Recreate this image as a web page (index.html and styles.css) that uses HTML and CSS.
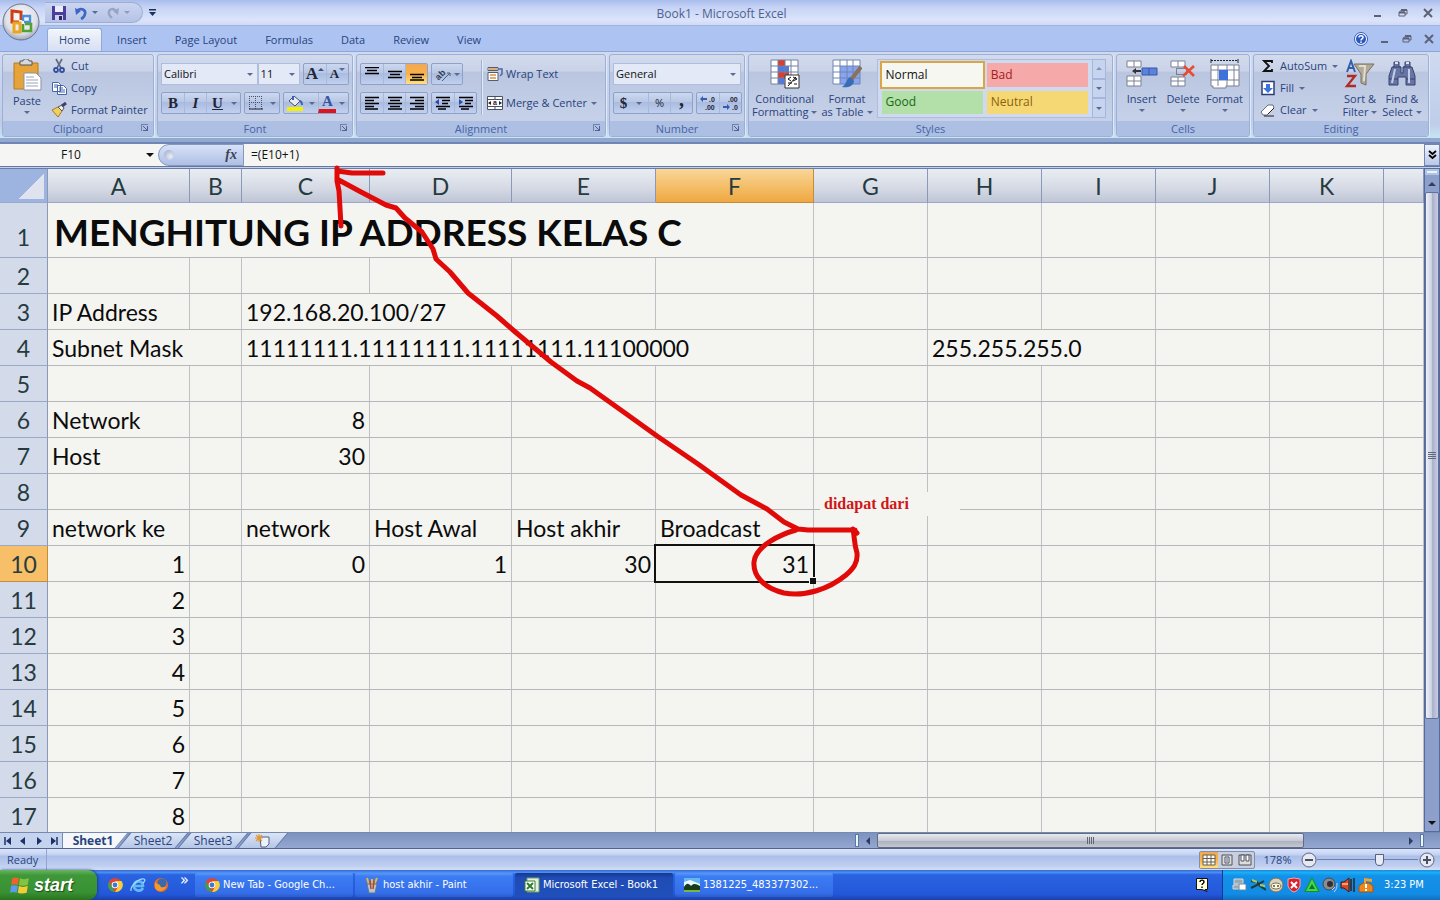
FILE: index.html
```html
<!DOCTYPE html>
<html lang="en">
<head>
<meta charset="utf-8">
<title>Book1 - Microsoft Excel</title>
<link rel="stylesheet" href="styles.css">
</head>
<body>
<div class="app">
  <header class="titlebar">
    <button class="office" aria-label="Office menu">
      <svg viewBox="0 0 38 38" width="38" height="38"><defs><radialGradient id="orb" cx=".5" cy=".4" r=".6"><stop offset="0" stop-color="#fff"/><stop offset=".7" stop-color="#dfe0e8"/><stop offset="1" stop-color="#9ea6bb"/></radialGradient></defs><circle cx="19" cy="19" r="18" fill="url(#orb)" stroke="#687494"/><g fill="none" stroke-width="3"><path d="M19 17V9l-9-1v11h7" stroke="#cf3d12"/><path d="M21 18v-5h7v6h-6" stroke="#4c8fdc" stroke-width="2.4"/><path d="M18 20h-6v9h6z" stroke="#eda61b"/><path d="M21 21v7h8v-7h-6" stroke="#53a035" stroke-width="2.6"/></g></svg>
    </button>
    <div class="quick">
      <button aria-label="Save"><svg viewBox="0 0 14 14" width="14" height="14"><path d="M0 0h14v14H0z" fill="#4c3f9c"/><path d="M3 0h8v6H3z" fill="#e9ecfa"/><path d="M3 9h8v5H3z" fill="#cdd2ea"/><path d="M7 10h3v4H7z" fill="#2b2766"/></svg></button>
      <button aria-label="Undo"><svg viewBox="0 0 14 14" width="14" height="14"><path d="M3 5c4-4 9-1 8 3-.4 2-2 4-4 5" fill="none" stroke="#3e66c4" stroke-width="2.6"/><path d="M1 2l1 7 5-4z" fill="#3e66c4"/></svg><i class="arrow"></i></button>
      <button aria-label="Redo"><svg viewBox="0 0 14 14" width="14" height="14"><path d="M10 5C6 1 2 4 3 8c.4 2 2 3 3 4" fill="none" stroke="#98a5c0" stroke-width="2.4"/><path d="M13 2l-1 7-5-4z" fill="#98a5c0"/></svg><i class="arrow faint"></i></button>
    </div>
    <button class="customize" aria-label="Customize toolbar"><svg viewBox="0 0 7 8" width="7" height="8"><path d="M0 0h7v1.500H0zM0 3h7L3.500 7z" fill="#1d2f60"/></svg></button>
    <h1>Book1 - Microsoft Excel</h1>
    <div class="winctl">
      <button aria-label="Minimize"><svg viewBox="0 0 10 10" width="10" height="10"><path d="M1 8h7" stroke="#5b6274" stroke-width="2"/></svg></button>
      <button aria-label="Restore"><svg viewBox="0 0 10 10" width="10" height="10"><path d="M3 3V2h6v4H7M1 4h6v4H1z" fill="none" stroke="#5b6274"/><path d="M1 4.500h6M3 2h6" stroke="#5b6274" stroke-width="2"/></svg></button>
      <button aria-label="Close"><svg viewBox="0 0 10 10" width="10" height="10"><path d="M1 1l8 8M9 1L1 9" stroke="#5b6274" stroke-width="2"/></svg></button>
    </div>
  </header>

  <nav class="tabs">
    <button class="tab active">Home</button><button class="tab">Insert</button><button class="tab">Page Layout</button><button class="tab">Formulas</button><button class="tab">Data</button><button class="tab">Review</button><button class="tab">View</button>
    <div class="winctl doc">
      <button aria-label="Help"><svg viewBox="0 0 14 14" width="14" height="14"><circle cx="7" cy="7" r="6.500" fill="#fff" stroke="#3758b0"/><circle cx="7" cy="7" r="5" fill="#2858c4"/><path d="M5 5.500c0-2.400 4-2.200 4-.2C9 7 7 6.800 7 8.500M7 9.500v1.500" stroke="#fff" stroke-width="1.500" fill="none"/></svg></button>
      <button aria-label="Minimize workbook"><svg viewBox="0 0 10 10" width="10" height="10"><path d="M1 8h7" stroke="#5b6274" stroke-width="2"/></svg></button>
      <button aria-label="Restore workbook"><svg viewBox="0 0 10 10" width="10" height="10"><path d="M3 3V2h6v4H7M1 4h6v4H1z" fill="none" stroke="#5b6274"/><path d="M1 4.500h6M3 2h6" stroke="#5b6274" stroke-width="2"/></svg></button>
      <button aria-label="Close workbook"><svg viewBox="0 0 10 10" width="10" height="10"><path d="M1 1l8 8M9 1L1 9" stroke="#5b6274" stroke-width="2"/></svg></button>
    </div>
  </nav>

  <div class="ribbon">
    <section class="group clipboard">
      <div class="body">
        <button class="big"><svg viewBox="0 0 30 32" width="30" height="32"><path d="M2 4h24v26H2z" fill="#e5a33a" stroke="#b77a20"/><path d="M8 2h3c0-3 6-3 6 0h3v4H8z" fill="#d8d8dc" stroke="#555"/><path d="M12 14h12l5 5v12H12z" fill="#fff" stroke="#8891a8"/><path d="M14 18h8M14 21h12M14 24h12M14 27h12" stroke="#9aa3b8"/></svg><span>Paste</span><i class="arrow"></i></button>
        <div class="stack">
          <button><svg viewBox="0 0 16 16" width="16" height="16"><path d="M5 1l5 9M11 1L6 10" stroke="#5d6b85" stroke-width="1.600"/><circle cx="5" cy="12" r="2" fill="none" stroke="#34509c" stroke-width="1.800"/><circle cx="11" cy="12" r="2" fill="none" stroke="#34509c" stroke-width="1.800"/></svg>Cut</button>
          <button><svg viewBox="0 0 16 16" width="16" height="16"><path d="M1.500 2.500h6l2 2v7h-8zM6.500 5.500h6l3 3v6h-9z" fill="#fff" stroke="#4264ac"/><path d="M3 5h4M3 7h3M8 8h4M8 10h6M8 12h6" stroke="#4264ac"/></svg>Copy</button>
          <button><svg viewBox="0 0 16 16" width="16" height="16"><path d="M1 8l6-3 4 4-4 6z" fill="#edd062" stroke="#a87a1c"/><path d="M7 5l4-2 2 3-2 3z" fill="#eee" stroke="#555"/><path d="M11 4l4-3" stroke="#463c70" stroke-width="3"/></svg>Format Painter</button>
        </div>
      </div>
      <footer>Clipboard<button class="launch" aria-label="Clipboard options"></button></footer>
    </section>

    <section class="group font">
      <div class="body rows">
        <div class="line">
          <label class="pick family"><select aria-label="Font"><option>Calibri</option></select><i class="arrow"></i></label><label class="pick size"><select aria-label="Font size"><option>11</option></select><i class="arrow"></i></label>
          <div class="set push"><button class="serif grow" aria-label="Increase font size">A<i class="arrow up"></i></button><button class="serif shrink" aria-label="Decrease font size">A<i class="arrow"></i></button></div>
        </div>
        <div class="line">
          <div class="set"><button class="serif">B</button><button class="serif italic">I</button><button class="serif under">U</button><button class="slim" aria-label="Underline style"><i class="arrow"></i></button></div>
          <div class="set"><button aria-label="Borders"><svg viewBox="0 0 14 14" width="14" height="14"><path d="M.5 0v13M6.500 0v13M12.500 0v13M0 .5h13M0 6.500h13" stroke="#465068" stroke-dasharray="1 1"/><path d="M0 13h14" stroke="#222"/></svg></button><button class="slim" aria-label="Border style"><i class="arrow"></i></button></div>
          <div class="set push"><button aria-label="Fill color"><svg viewBox="0 0 16 16" width="16" height="16"><path d="M2 6l5-5 6 5-5 5z" fill="#e8ebf4" stroke="#4b5268"/><path d="M6 5V1M12 6c3 0 3 2 3 4" stroke="#3b62b4" stroke-width="2" fill="none"/><path d="M0 12h16v4H0z" fill="#f5f000"/></svg></button><button class="slim" aria-label="Fill color list"><i class="arrow"></i></button><button class="serif color">A</button><button class="slim" aria-label="Font color list"><i class="arrow"></i></button></div>
        </div>
      </div>
      <footer>Font<button class="launch" aria-label="Font options"></button></footer>
    </section>

    <section class="group alignment">
      <div class="body split">
        <div class="rows">
          <div class="line">
            <div class="set"><button aria-label="Top align"><svg viewBox="0 0 14 14" width="14" height="14"><path d="M0 .5h14M2 3.500h10M0 6.500h14" stroke="#000" stroke-width="1.500"/></svg></button><button aria-label="Middle align"><svg viewBox="0 0 14 14" width="14" height="14"><path d="M0 4.500h14M2 7.500h10M0 10.500h14" stroke="#000" stroke-width="1.500"/></svg></button><button class="on" aria-label="Bottom align"><svg viewBox="0 0 14 14" width="14" height="14"><path d="M0 7.500h14M2 10.500h10M0 13h14" stroke="#000" stroke-width="1.500"/></svg></button></div>
            <div class="set orient"><button aria-label="Orientation"><svg viewBox="0 0 18 16" width="18" height="16"><text x="1" y="12" class="ab" transform="rotate(-45 6 9)">ab</text><path d="M8 15l8-8M16 7h-3M16 7v3" stroke="#555c70" fill="none"/></svg><i class="arrow"></i></button></div>
          </div>
          <div class="line">
            <div class="set"><button aria-label="Align left"><svg viewBox="0 0 14 14" width="14" height="14"><path d="M0 1.500h14M0 4.500h9M0 7.500h14M0 10.500h9M0 13h13" stroke="#000" stroke-width="1.400"/></svg></button><button aria-label="Center"><svg viewBox="0 0 14 14" width="14" height="14"><path d="M0 1.500h14M2 4.500h10M0 7.500h14M2 10.500h10M0 13h14" stroke="#000" stroke-width="1.400"/></svg></button><button aria-label="Align right"><svg viewBox="0 0 14 14" width="14" height="14"><path d="M0 1.500h14M5 4.500h9M0 7.500h14M5 10.500h9M0 13h14" stroke="#000" stroke-width="1.400"/></svg></button></div>
            <div class="set"><button aria-label="Decrease indent"><svg viewBox="0 0 16 14" width="16" height="14"><path d="M1 1.500h14M7 4.500h8M7 7.500h6M1 10.500h14M3 13h8" stroke="#000" stroke-width="1.500"/><path d="M0 6l4-3v6z" fill="#2b4cb0"/></svg></button><button aria-label="Increase indent"><svg viewBox="0 0 16 14" width="16" height="14"><path d="M1 1.500h14M7 4.500h8M7 7.500h6M1 10.500h14M3 13h8" stroke="#000" stroke-width="1.500"/><path d="M5 6L1 3v6z" fill="#2b4cb0"/></svg></button></div>
          </div>
        </div>
        <div class="rows wrap">
          <button class="text"><svg viewBox="0 0 16 16" width="16" height="16"><path d="M1 1.500h10v3H1zM1 6.500h10v8H1z" fill="#fff" stroke="#555c6e"/><path d="M2 3h8M3 9h6M3 12h6" stroke="#d99342" stroke-width="1.500"/><path d="M11 3h4v5l-2 2" fill="none" stroke="#4d66a8" stroke-width="1.500"/></svg>Wrap Text</button>
          <button class="text"><svg viewBox="0 0 16 16" width="16" height="16"><path d="M.5 1.500h15v13H.5zM.5 4.500h15M.5 11.500h15M8 1v3M8 12v3" fill="#fff" stroke="#4b5062"/><path d="M1 8l3-2v4zM15 8l-3-2v4z" fill="#222"/><text x="6" y="10" class="tiny">a</text></svg>Merge &amp; Center<i class="arrow"></i></button>
        </div>
      </div>
      <footer>Alignment<button class="launch" aria-label="Alignment options"></button></footer>
    </section>

    <section class="group number">
      <div class="body rows">
        <label class="pick general"><select aria-label="Number format"><option>General</option></select><i class="arrow"></i></label>
        <div class="line">
          <div class="set num"><button class="serif">$<i class="arrow"></i></button><button>%</button><button class="serif comma">,</button></div>
          <div class="set dec push"><button aria-label="Increase decimal"><svg viewBox="0 0 18 18" width="18" height="18"><path d="M1 5l3-3v2h4v2H4v2z" fill="#345cb5"/><text x="10" y="8" class="tiny">.0</text><text x="6" y="16" class="tiny">.00</text></svg></button><button aria-label="Decrease decimal"><svg viewBox="0 0 18 18" width="18" height="18"><text x="6" y="8" class="tiny">.00</text><text x="10" y="16" class="tiny">.0</text><path d="M8 13l-3-3v2H1v2h4v2z" fill="#345cb5"/></svg></button></div>
        </div>
      </div>
      <footer>Number<button class="launch" aria-label="Number options"></button></footer>
    </section>

    <section class="group styles">
      <div class="body">
        <button class="big"><svg viewBox="0 0 30 30" width="30" height="30"><path d="M1 1h27v24H1z" fill="#fff"/><path d="M8 1h7v6H8zM8 13h11v6H8z" fill="#dd3d2d"/><path d="M8 7h11v6H8zM8 19h6v6H8z" fill="#5379dc"/><path d="M1 1h27v24H1zM8 1v24M15 1v24M21 1v24M1 7h27M1 13h27M1 19h27" fill="none" stroke="#7280a0"/><path d="M15 16h14v13H15z" fill="#fff" stroke="#333"/><path d="M21 18l-3 2 3 2M18 24h4M23 18l4 2-4 2M24 25h3M18 27l8-9" stroke="#111" fill="none"/></svg><span>Conditional<br>Formatting<i class="arrow"></i></span></button>
        <button class="big"><svg viewBox="0 0 30 30" width="30" height="30"><path d="M1 1h27v24H1z" fill="#fff"/><path d="M8 7h20v18H8z" fill="#86a5ee"/><path d="M1 1h27v24H1zM8 1v24M15 1v24M21 1v24M1 7h27M1 13h27M1 19h27" fill="none" stroke="#7084b4"/><path d="M29 8L18 22" stroke="#8c715a" stroke-width="4"/><path d="M18 18l4 4c-1 6-7 7-12 6 5-3 4-8 8-10z" fill="#376cb8"/></svg><span>Format<br>as Table<i class="arrow"></i></span></button>
        <div class="gallery"><button class="normal">Normal</button><button class="bad">Bad</button><button class="good">Good</button><button class="neutral">Neutral</button></div>
        <div class="spin"><button aria-label="Previous styles"><i class="arrow up faint"></i></button><button aria-label="Next styles"><i class="arrow"></i></button><button class="more" aria-label="More styles"><i class="arrow"></i></button></div>
      </div>
      <footer>Styles</footer>
    </section>

    <section class="group cells">
      <div class="body">
        <button class="big"><svg viewBox="0 0 32 30" width="32" height="30"><path d="M1 2h14v6H1zM8 2v6M1 17h14v10H1zM1 22h14M8 17v10" fill="#fff" stroke="#7b8194"/><path d="M16 9h15v7H16z" fill="#5a83e0" stroke="#3656a2"/><path d="M23 9v7" stroke="#3656a2"/><path d="M6 12l4-3v2h5v2h-5v2z" fill="#333"/></svg><span>Insert</span><i class="arrow"></i></button>
        <button class="big"><svg viewBox="0 0 28 30" width="28" height="30"><path d="M2 2h14v6H2zM9 2v6M2 18h14v9H2zM2 22h14M9 18v9" fill="#fff" stroke="#7b8194"/><path d="M7.500 9.500h10v6h-10z" fill="none" stroke="#333" stroke-dasharray="1 1"/><path d="M15 7l10 10M25 7L14 17" stroke="#e54d32" stroke-width="2.600"/></svg><span>Delete</span><i class="arrow"></i></button>
        <button class="big"><svg viewBox="0 0 32 30" width="32" height="30"><path d="M2 1.500h27" stroke="#222" stroke-dasharray="2 1"/><path d="M2 0v4M29 0v4" stroke="#222"/><path d="M2 6h28v21H17v2H4v-2H2z" fill="#fff" stroke="#7b8194"/><path d="M9 6v21M18 6v21M25 6v21M2 11h28M2 21h28" stroke="#7b8194"/><path d="M10 11h9v10h-9z" fill="#3d71dc"/></svg><span>Format</span><i class="arrow"></i></button>
      </div>
      <footer>Cells</footer>
    </section>

    <section class="group editing">
      <div class="body">
        <div class="stack">
          <button><svg viewBox="0 0 16 16" width="16" height="16"><path d="M12 5V3H4l5 5-5 5h8v-2" fill="none" stroke="#111" stroke-width="1.800"/></svg>AutoSum<i class="arrow"></i></button>
          <button><svg viewBox="0 0 16 16" width="16" height="16"><path d="M2 1.500h12v13H2z" fill="#fff" stroke="#2c3c78" stroke-width="1.500"/><path d="M6 4h4v4h3l-5 5-5-5h3z" fill="#3c73dd"/></svg>Fill<i class="arrow"></i></button>
          <button><svg viewBox="0 0 16 16" width="16" height="16"><path d="M1 10l7-7h5l1 3-7 7H3z" fill="#fff" stroke="#686e80"/><path d="M4 14h10M8 12l6-6" stroke="#222"/></svg>Clear<i class="arrow"></i></button>
        </div>
        <button class="big"><svg viewBox="0 0 32 30" width="32" height="30"><path d="M10 5h20l-8 10v11l-5-2V15z" fill="#b4aa98" stroke="#756e64"/><path d="M15 7h6l-1 15" stroke="#e5ddd0" fill="none" stroke-width="2"/><path d="M3 13L7 2l4 11M4 9h6" fill="none" stroke="#315fae" stroke-width="2"/><path d="M3 17h8L3 27h9" fill="none" stroke="#b02c22" stroke-width="2.300"/></svg><span>Sort &amp;<br>Filter<i class="arrow"></i></span></button>
        <button class="big"><svg viewBox="0 0 32 30" width="32" height="30"><path d="M8 3h5v5h2v6h2V8h2V3h5v5h2l3 9v9h-9v-8h-8v8H3v-9l3-9h2z" fill="#6675a3" stroke="#39456e"/><path d="M3 20h9M20 20h9M7 8h8M17 8h8" stroke="#39456e"/><path d="M9 10L6 24M23 10v14" stroke="#c3cde8" stroke-width="2"/><path d="M9 4h3M20 4h3" stroke="#dde3f4" stroke-width="2"/></svg><span>Find &amp;<br>Select<i class="arrow"></i></span></button>
      </div>
      <footer>Editing</footer>
    </section>
  </div>

  <div class="formula">
    <input class="namebox" aria-label="Name box" value="F10">
    <button class="namelist" aria-label="Name list"><i class="arrow dark"></i></button>
    <div class="fx"><i class="knob"></i><button aria-label="Insert function">fx</button></div>
    <input class="expr" aria-label="Formula" value="=(E10+1)">
    <button class="expand" aria-label="Expand formula bar"><svg viewBox="0 0 9 10" width="9" height="10"><path d="M1 1l3.500 3L8 1M1 5l3.500 3L8 5" fill="none" stroke="#000" stroke-width="1.800"/></svg></button>
  </div>

  <main class="work">
    <div class="sheet">
      <table>
        <colgroup><col class="w48"><col class="w142"><col class="w52"><col class="w128"><col class="w142"><col class="w144"><col class="w158"><col class="w114"><col class="w114"><col class="w114"><col class="w114"><col class="w114"><col></colgroup>
        <thead><tr><th class="corner"></th><th>A</th><th>B</th><th>C</th><th>D</th><th>E</th><th class="sel">F</th><th>G</th><th>H</th><th>I</th><th>J</th><th>K</th><th></th></tr></thead>
        <tbody>
          <tr class="tall"><th>1</th><td colspan="6" class="title">MENGHITUNG IP ADDRESS KELAS C</td><td></td><td></td><td></td><td></td><td></td><td></td></tr>
          <tr><th>2</th><td></td><td></td><td></td><td></td><td></td><td></td><td></td><td></td><td></td><td></td><td></td><td></td></tr>
          <tr><th>3</th><td>IP Address</td><td></td><td colspan="2">192.168.20.100/27</td><td></td><td></td><td></td><td></td><td></td><td></td><td></td><td></td></tr>
          <tr><th>4</th><td colspan="2">Subnet Mask</td><td colspan="4">11111111.11111111.11111111.11100000</td><td></td><td colspan="2">255.255.255.0</td><td></td><td></td><td></td></tr>
          <tr><th>5</th><td></td><td></td><td></td><td></td><td></td><td></td><td></td><td></td><td></td><td></td><td></td><td></td></tr>
          <tr><th>6</th><td>Network</td><td></td><td class="n">8</td><td></td><td></td><td></td><td></td><td></td><td></td><td></td><td></td><td></td></tr>
          <tr><th>7</th><td>Host</td><td></td><td class="n">30</td><td></td><td></td><td></td><td></td><td></td><td></td><td></td><td></td><td></td></tr>
          <tr><th>8</th><td></td><td></td><td></td><td></td><td></td><td></td><td></td><td></td><td></td><td></td><td></td><td></td></tr>
          <tr><th>9</th><td>network ke</td><td></td><td>network</td><td>Host Awal</td><td>Host akhir</td><td>Broadcast</td><td></td><td></td><td></td><td></td><td></td><td></td></tr>
          <tr><th class="sel">10</th><td class="n">1</td><td></td><td class="n">0</td><td class="n">1</td><td class="n">30</td><td class="n cursor">31</td><td></td><td></td><td></td><td></td><td></td><td></td></tr>
          <tr><th>11</th><td class="n">2</td><td></td><td></td><td></td><td></td><td></td><td></td><td></td><td></td><td></td><td></td><td></td></tr>
          <tr><th>12</th><td class="n">3</td><td></td><td></td><td></td><td></td><td></td><td></td><td></td><td></td><td></td><td></td><td></td></tr>
          <tr><th>13</th><td class="n">4</td><td></td><td></td><td></td><td></td><td></td><td></td><td></td><td></td><td></td><td></td><td></td></tr>
          <tr><th>14</th><td class="n">5</td><td></td><td></td><td></td><td></td><td></td><td></td><td></td><td></td><td></td><td></td><td></td></tr>
          <tr><th>15</th><td class="n">6</td><td></td><td></td><td></td><td></td><td></td><td></td><td></td><td></td><td></td><td></td><td></td></tr>
          <tr><th>16</th><td class="n">7</td><td></td><td></td><td></td><td></td><td></td><td></td><td></td><td></td><td></td><td></td><td></td></tr>
          <tr><th>17</th><td class="n">8</td><td></td><td></td><td></td><td></td><td></td><td></td><td></td><td></td><td></td><td></td><td></td></tr>
        </tbody>
      </table>
    </div>
    <div class="vscroll"><i class="vsplit"></i><button aria-label="Scroll up"><i class="arrow up dark"></i></button><div class="vthumb"><i></i></div><div class="vtrack"></div><button aria-label="Scroll down"><i class="arrow dark"></i></button></div>
    <div class="note">didapat dari</div>
    <svg class="ink" viewBox="0 0 1440 664" width="1440" height="664">
      <path d="M383 4H352L337 2V-1V12L339 22L341 57M337 10L361 23L386 36L396 39L405 49L422 63L433 80L436 90L450 103L468 124L497 147L513 161L532 177L551 193L577 212L590 219L625 244L657 267L698 295L741 326L767 340L784 353L798 360L808 361H855M796 361C782 365 756 376 754 393C753 406 763 419 784 424C805 428 829 420 846 406C853 400 858 394 857 384C854 375 855 371 853 360L857 364"/>
    </svg>
  </main>

  <div class="sheetbar">
    <div class="sheetnav"><button aria-label="First sheet"><svg viewBox="0 0 8 8" width="8" height="8"><path d="M1 0v8" stroke="#1c3264" stroke-width="1.500"/><path d="M7 0v8L2 4z" fill="#1c3264"/></svg></button><button aria-label="Previous sheet"><svg viewBox="0 0 8 8" width="8" height="8"><path d="M6 0v8L1 4z" fill="#1c3264"/></svg></button><button aria-label="Next sheet"><svg viewBox="0 0 8 8" width="8" height="8"><path d="M2 0v8l5-4z" fill="#1c3264"/></svg></button><button aria-label="Last sheet"><svg viewBox="0 0 8 8" width="8" height="8"><path d="M1 0v8l5-4z" fill="#1c3264"/><path d="M7 0v8" stroke="#1c3264" stroke-width="1.500"/></svg></button></div>
    <button class="stab current">Sheet1</button><button class="stab">Sheet2</button><button class="stab">Sheet3</button><button class="stab add" aria-label="Insert sheet"><svg viewBox="0 0 16 14" width="16" height="14"><path d="M5 3h9v7l-3 3H6z" fill="#eef2fa" stroke="#50607e"/><path d="M4 0v8M0 4h8M1 1l6 6M7 1L1 7" stroke="#e09a35" stroke-width="1.200"/></svg></button>
    <div class="hscroll"><i class="hsplit"></i><button aria-label="Scroll left"><i class="tri left"></i></button><div class="hthumb"><i></i></div><div class="htrack"></div><button aria-label="Scroll right"><i class="tri right"></i></button><i class="hsplit"></i></div>
  </div>

  <div class="status">
    <span class="ready">Ready</span>
    <div class="views">
      <button class="on" aria-label="Normal view"><svg viewBox="0 0 14 12" width="14" height="12"><path d="M1 1h12v10H1zM5 1v10M9 1v10M1 4.500h12M1 8h12" fill="#fff" stroke="#675e4c"/></svg></button><button aria-label="Page layout view"><svg viewBox="0 0 14 12" width="14" height="12"><path d="M2 1h10v10H2z" fill="#ddd" stroke="#4d5260"/><path d="M5 3h4v6H5zM6 5h2M6 7h2" fill="#fff" stroke="#4d5260"/></svg></button><button aria-label="Page break view"><svg viewBox="0 0 14 12" width="14" height="12"><path d="M1 1h12v10H1z" fill="#ddd" stroke="#4d5260"/><path d="M3 1h3v6H3zM8 1h3v6H8z" fill="#fff" stroke="#4d5260"/></svg></button>
    </div>
    <button class="percent">178%</button>
    <button class="round" aria-label="Zoom out"><svg viewBox="0 0 16 16" width="16" height="16"><circle cx="8" cy="8" r="7" fill="#e6e9f1" stroke="#5d6680"/><path d="M4 8h8" stroke="#4a5165" stroke-width="2"/></svg></button>
    <input class="zoom" type="range" aria-label="Zoom" min="0" max="100" value="63">
    <button class="round" aria-label="Zoom in"><svg viewBox="0 0 16 16" width="16" height="16"><circle cx="8" cy="8" r="7" fill="#e6e9f1" stroke="#5d6680"/><path d="M4 8h8M8 4v8" stroke="#4a5165" stroke-width="2"/></svg></button>
  </div>

  <footer class="taskbar">
    <button class="start"><svg viewBox="0 0 18 18" width="20" height="20"><path d="M2 3c2-1 4-1 6 0L7 9C5 8 3 8 1 9z" fill="#ef622c"/><path d="M9 3c2 1 5 1 8 0l-1 6c-3 1-6 1-8 0z" fill="#82c341"/><path d="M1 10c2-1 4-1 6 0l-1 6c-2-1-4-1-6 0z" fill="#5a9df0"/><path d="M8 10c2 1 5 1 8 0l-1 6c-3 1-6 1-8 0z" fill="#f7cb35"/></svg>start</button>
    <div class="launchers">
      <button aria-label="Chrome"><svg viewBox="0 0 16 16" width="16" height="16"><g id="chrome"><circle cx="8" cy="8" r="7" fill="#de4537"/><path d="M2 4.500L6 11l2 4A7 7 0 0 1 2 4.500z" fill="#3f9d4f"/><path d="M8 4h6.500A7 7 0 0 1 8 15l3-5z" fill="#f6cd3d"/><circle cx="8" cy="8" r="3.300" fill="#fff"/><circle cx="8" cy="8" r="2.400" fill="#3f76d8"/></g></svg></button>
      <button aria-label="Internet Explorer"><svg viewBox="0 0 16 16" width="16" height="16"><path d="M13 11c-3 5-10 2-9-3s9-5 9 1H4" fill="none" stroke="#63b9f4" stroke-width="2.600"/><path d="M1 14C0 9 9 1 14 2c2 1 0 3-1 4" fill="none" stroke="#a7dcff" stroke-width="1.200"/></svg></button>
      <button aria-label="Firefox"><svg viewBox="0 0 16 16" width="16" height="16"><circle cx="8" cy="8" r="7" fill="#ea6b22"/><circle cx="9" cy="6" r="4.500" fill="#3868ad"/><path d="M2 3c0 4 2 3 5 5 0 3 4 3 6 1-1 6-10 7-11 1z" fill="#f49a2c"/></svg></button>
      <button class="chev" aria-label="More shortcuts">»</button>
    </div>
    <div class="tasks">
      <button class="task"><svg viewBox="0 0 16 16" width="16" height="16"><use href="#chrome"/></svg><span>New Tab - Google Ch...</span></button>
      <button class="task"><svg viewBox="0 0 16 16" width="16" height="16"><path d="M5 8L3 1M8 8V2M10 8l3-7" stroke="#eab344" stroke-width="2"/><path d="M3 7h10l-2 9H5z" fill="#b9c4cf" stroke="#65758a"/><path d="M6 4l1 8M10 4l-1 8" stroke="#b04630" stroke-width="1.500"/></svg><span>host akhir - Paint</span></button>
      <button class="task pressed"><svg viewBox="0 0 16 16" width="16" height="16"><path d="M3 1h12v14H3z" fill="#e4f0dc" stroke="#71a164"/><path d="M1 4h10v10H1z" fill="#fff" stroke="#397e35"/><path d="M3 6l6 6M9 6l-6 6" stroke="#2e7d2e" stroke-width="2"/></svg><span>Microsoft Excel - Book1</span></button>
      <button class="task"><svg viewBox="0 0 16 16" width="16" height="16"><path d="M0 1h16v14H0z" fill="#63b8ed"/><path d="M0 5l6-2 10 4v3H0z" fill="#edf7ff"/><path d="M0 10c3-5 5-3 7-1 3-3 5-2 9 0v4H0z" fill="#153f1c"/><path d="M0 13h16v2H0z" fill="#7cb543"/></svg><span>1381225_483377302...</span></button>
    </div>
    <button class="lang" aria-label="Help bar"><svg viewBox="0 0 12 14" width="12" height="14"><path d="M.5.500h11v11H9l2 2-5-2H.5z" fill="#ffffdf" stroke="#111"/><path d="M4 4c0-2.500 4-2.500 4 0 0 1.500-2 1.500-2 3M6 8.500v1.500" fill="none" stroke="#000" stroke-width="1.400"/></svg></button>
    <div class="tray">
      <svg viewBox="0 0 16 16" width="16" height="16"><path d="M2 2h9v5H2zM1 8h6v4H1z" fill="#9ea9af" stroke="#d6dcdf"/><path d="M7 7h7v6H7z" fill="#fff" stroke="#6887a5"/></svg>
      <svg viewBox="0 0 16 16" width="16" height="16"><path d="M1 4l6 1 3 4 6 4M1 11l6-3 7-4" stroke="#233b35" stroke-width="2" fill="none"/><path d="M2 3l5 2M10 8l5 1" stroke="#a4cf68" stroke-width="2"/></svg>
      <svg viewBox="0 0 16 16" width="16" height="16"><circle cx="8" cy="8" r="7" fill="#d9d4bd" stroke="#7c705a"/><ellipse cx="8" cy="9" rx="5" ry="3" fill="#fff7dd" stroke="#786b54"/><path d="M6 8v2M10 8v2" stroke="#594f40" stroke-width="1.500"/></svg>
      <svg viewBox="0 0 16 16" width="16" height="16"><path d="M2 2l6-1 6 1v7c-1 3-3 5-6 6-3-1-5-3-6-6z" fill="#d92231" stroke="#f5a8a5"/><path d="M5 5l6 6M11 5l-6 6" stroke="#fff" stroke-width="2"/></svg>
      <svg viewBox="0 0 16 16" width="16" height="16"><path d="M8 0l8 15H0z" fill="#159326"/><path d="M8 2L2 14h12z" fill="#42d650"/><path d="M8 7l3 5H5z" fill="#147528"/></svg>
      <svg viewBox="0 0 16 16" width="16" height="16"><circle cx="7" cy="7" r="6" fill="#8b8b8c" stroke="#4a4650"/><circle cx="8" cy="7" r="3" fill="#302e34"/><path d="M12 15c3-3 3-6 3-9M10 13l3-3" stroke="#d1daf0" fill="none"/></svg>
      <svg viewBox="0 0 16 16" width="16" height="16"><path d="M1 5h3l5-4v14l-5-4H1z" fill="#dd4825" stroke="#3d1713"/><path d="M11 2v12M14 1v14" stroke="#2d2320" stroke-width="1.500"/><path d="M2 7h6" stroke="#ffa06c" stroke-width="2"/></svg>
      <svg viewBox="0 0 16 16" width="16" height="16"><path d="M1 15V9l4-3h6l4 3v6z" fill="#ed871c" stroke="#9f5719"/><path d="M6 6V1l8 1v3l-6-1v3" fill="#f1a231"/><path d="M8 7v4M8 12v2" stroke="#fff" stroke-width="2"/></svg>
      <time>3:23 PM</time>
    </div>
  </footer>
</div>
</body>
</html>
```

FILE: styles.css
```css
* { box-sizing: border-box; }
body { margin: 0; font: 11px/14px "Open Sans", "Noto Sans", sans-serif; color: #29437c; background: #b4c3e8; }
button, input, select { font: inherit; color: inherit; border: 0; padding: 0; margin: 0; background: none; }
button { display: flex; align-items: center; justify-content: center; white-space: nowrap; }
svg { display: block; flex: none; }
.app { height: 100vh; display: flex; flex-direction: column; overflow: hidden; }

.arrow { display: inline-block; flex: none; border: 3px solid transparent; border-top-color: #5a6a94; border-bottom: 0; margin-left: 4px; }
.arrow.up { border: 3px solid transparent; border-bottom-color: #3d5080; border-top: 0; }
.arrow.faint { opacity: .5; }
.arrow.dark { border-width: 4px 4px 0; border-top-color: #111; }
.arrow.up.dark { border-width: 0 4px 4px; border-bottom-color: #333c5c; }

/* title bar */
.titlebar { position: relative; height: 26px; display: flex; align-items: center; padding-left: 45px; background: linear-gradient(#a9bdec, #c6d3f5 30%, #dbe4fa 80%, #cfdaf5); border-bottom: 1px solid #a2b4de; }
.office { position: absolute; left: 2px; top: 3px; z-index: 3; }
.quick { width: 98px; height: 21px; padding-left: 7px; display: flex; align-items: center; gap: 8px; border: 1px solid #9eadd2; border-left: 0; border-radius: 0 11px 11px 0; background: linear-gradient(#cbd5f0, #b6c3e6); }
.customize { margin-left: 6px; }
.titlebar h1 { flex: 1; margin: 0; padding-top: 2px; padding-right: 86px; font-size: 12px; line-height: 16px; font-weight: 400; color: #4e6290; text-align: center; }
.winctl { display: flex; gap: 15px; padding-right: 7px; }

.tabs { height: 25px; display: flex; align-items: flex-end; padding-left: 47px; background: #adc4f3; position: relative; }
.tab { height: 23px; padding: 0 14px; }
.tab.active { padding: 0 11px; margin-right: 1px; border: 1px solid #8fa8d8; border-bottom: 0; border-radius: 3px 3px 0 0; background: linear-gradient(#f1f5fc, #d8dff1); box-shadow: inset 0 1px #fff; }
.tabs .winctl { margin-left: auto; align-self: center; align-items: center; padding-right: 6px; gap: 12px; }

/* ribbon */
.ribbon { height: 92px; display: flex; gap: 3px; padding: 2px 11px 5px 2px; border-top: 1px solid #8fa5d8; border-bottom: 1px solid #6e84b4; background: linear-gradient(#cfdaf1, #bfcdea 80%, #c5e5f3 95%, #94a9d0 96%); }
.group { display: flex; flex-direction: column; overflow: hidden; border: 1px solid #9dafd4; border-radius: 3px; background: linear-gradient(#d2daed, #c9d2e7 20%, #bac6e0 21%, #cad4ec); box-shadow: 1px 0 #dfeaf8; }
.group footer { height: 15px; position: relative; text-align: center; line-height: 16px; color: #4863a4; background: #adc0e4; }
.launch { position: absolute; right: 5px; top: 3px; width: 7px; height: 7px; border-top: 1px solid #7281a8; border-left: 1px solid #7281a8; }
.launch::after { content: ""; position: absolute; right: 0; bottom: 0; width: 4px; height: 4px; border-right: 1px solid #53648f; border-bottom: 1px solid #53648f; background: linear-gradient(45deg, transparent 40%, #53648f 40%, #53648f 60%, transparent 60%); }
.body { flex: 1; display: flex; min-height: 0; }
.clipboard { width: 152px; }
.font { width: 196px; }
.alignment { width: 250px; }
.number { width: 136px; }
.styles { flex: 1; }
.cells { width: 134px; }
.editing { width: 176px; }
.big { flex-direction: column; justify-content: flex-start; padding-top: 4px; line-height: 13px; }
.big > span { padding-top: 3px; }
.big > .arrow { margin: 4px 0 0; }
.big span .arrow { margin-left: 3px; vertical-align: 2px; }
.clipboard .big { width: 48px; }
.stack { display: flex; flex-direction: column; }
.stack button { height: 22px; justify-content: flex-start; gap: 4px; }
.stack .arrow, .text .arrow { margin-left: 1px; }
.rows { display: flex; flex-direction: column; gap: 7px; padding: 8px 3px 0; }
.line { display: flex; gap: 3px; height: 22px; }
.push { margin-left: auto; }
.pick { position: relative; display: flex; height: 22px; background: #e3e9f7; border: 1px solid #adbddd; }
.pick select { appearance: none; width: 100%; padding-left: 2px; color: #111; }
.pick .arrow { position: absolute; right: 4px; top: 9px; }
.pick.family { width: 98px; }
.pick.size { width: 43px; margin-left: -3px; }
.set { display: flex; border: 1px solid #8da1cb; border-radius: 2px; background: linear-gradient(#ccd8f0, #b9c7e5 45%, #a9bbdf 46%, #c2d0ef); }
.set button { width: 22px; color: #202636; }
.set button + button:not(.slim) { border-left: 1px solid #a9b9da; }
.set .slim { width: 12px; }
.slim .arrow { margin: 0; }
.serif { font-family: "Liberation Serif", serif; font-weight: 700; font-size: 15px; }
.italic { font-style: italic; }
.under { text-decoration: underline; }
.grow { font-size: 17px; }
.shrink { font-size: 13px; }
.grow .arrow, .shrink .arrow { margin: 0 0 9px; }
.set .color { color: #35559c; line-height: 13px; border-bottom: 4px solid #dc151c; width: 18px; }
.on { background: linear-gradient(#f0a955, #fbb045 50%, #ffe185); }
.orient button { width: 30px; }
.orient .arrow { margin-left: 2px; }
.ab { font: bold 9px "Liberation Sans", sans-serif; fill: #333a4d; }
.tiny { font: bold 7px "Liberation Sans", sans-serif; fill: #1d2435; }
.split .wrap { flex: 1; margin: 5px 0 6px 1px; padding: 3px 0 0 5px; border-left: 1px solid #9eafd2; box-shadow: inset 1px 0 #e3eafa; }
.text { height: 22px; justify-content: flex-start; gap: 3px; }
.number .pick { width: 128px; }
.num button:first-child { width: 34px; }
.num .arrow { margin-left: 9px; }
.num .comma { font-size: 20px; line-height: 10px; padding-bottom: 8px; }
.styles .body { padding: 0 4px 0 3px; gap: 4px; }
.gallery { flex: 1; margin: 4px 0 3px; display: grid; grid-template: 1fr 1fr / 1fr 1fr; gap: 4px; padding: 3px 4px; font-size: 12px; background: #cfdaf0; border: 1px solid #aebddb; }
.gallery button { justify-content: flex-start; padding-left: 4px; }
.normal { background: #f7f7f2; color: #111; outline: 2px solid #dba445; }
.bad { background: #f5a9a9; color: #a3201c; }
.good { background: #b3dfa9; color: #176817; }
.neutral { background: #f5d874; color: #8c5f0c; }
.spin { width: 14px; margin: 4px 2px 3px -5px; display: flex; flex-direction: column; }
.spin button { flex: 1; border: 1px solid #a5b6da; background: #c7d4f0; }
.spin .arrow { margin: 0; }
.more .arrow { box-shadow: 0 -6px 0 -2px #5a6a94; }
.cells .body { padding: 0 4px; justify-content: space-between; }
.cells .big { width: 41px; }
.editing .body { padding-left: 6px; }
.editing .stack { width: 79px; }
.editing .big { width: 42px; }

/* formula bar */
.formula { height: 24px; display: flex; align-items: stretch; background: #f5f5f3; border-top: 1px solid #7186b4; border-bottom: 1px solid #64789f; color: #111; font-size: 12px; }
.namebox { width: 142px; text-align: center; }
.namelist { width: 16px; }
.namelist .arrow { margin: 0; }
.fx { width: 86px; display: flex; align-items: center; justify-content: space-between; padding: 0 6px 0 5px; border: 1px solid #8497bf; border-radius: 11px 0 0 11px; background: linear-gradient(#d8e2f8, #aebfe5); }
.fx button { font: italic bold 14px/16px "Liberation Serif", serif; color: #3b4256; }
.knob { width: 10px; height: 10px; border-radius: 50%; background: radial-gradient(circle at 65% 65%, #e8edf8, #98a5c4); }
.expr { flex: 1; padding-left: 7px; }
.expand { width: 16px; border: 1px solid #7186b4; background: linear-gradient(#eef2fb, #b9c8e8); }

/* worksheet */
.work { flex: 1; min-height: 0; display: flex; position: relative; padding-top: 1px; background: #c3d1ee; }
.sheet { flex: 1; overflow: hidden; background: #f4f4f1; border-top: 1px solid #6b7da3; }
table { width: 100%; table-layout: fixed; border-collapse: separate; border-spacing: 0; font: 23px/28px Lato, "Open Sans", sans-serif; color: #0b0b0b; }
.w48 { width: 48px; } .w52 { width: 52px; } .w114 { width: 114px; } .w128 { width: 128px; }
.w142 { width: 142px; } .w144 { width: 144px; } .w158 { width: 158px; }
th { font-weight: 400; color: #253b3f; padding: 0; border-right: 1px solid #8b99b8; border-bottom: 1px solid #9aa9c8; }
thead th { height: 34px; background: linear-gradient(#e9edf3, #d5d9e4 60%, #bfc5d6); }
tbody th { background: #d3daea; }
thead .corner { background: linear-gradient(135deg, transparent 50%, #dee3ef 50%) 18px 5px / 26px 25px no-repeat, #9db4e0; }
thead .sel { background: linear-gradient(#f9d699, #f3bb62 60%, #efa743); border-color: #c68d39; }
tbody .sel { background: #f6bf68; border-color: #c68d39; }
td { height: 36px; padding: 0 4px; border-right: 1px solid #bfc0c3; border-bottom: 1px solid #b5b7ba; white-space: nowrap; }
.tall td, .tall th { height: 55px; }
.tall th { padding-top: 14px; }
td.title { font-size: 37px; line-height: 46px; font-weight: 700; padding: 4px 6px 0; }
.n { text-align: right; }
.cursor { position: relative; }
.cursor::before { content: ""; position: absolute; inset: -2px; border: 2px solid #111; }
.cursor::after { content: ""; position: absolute; right: -3px; bottom: -3px; width: 6px; height: 6px; background: #111; border: solid #f4f4f1; border-width: 1px 0 0 1px; }
.vscroll { width: 16px; display: flex; flex-direction: column; background: #8da0cb; border: solid #556c9e; border-width: 1px; }
.vsplit { height: 6px; background: #eaf2fa; border: 2px solid #b2c3e2; }
.vscroll button { height: 17px; }
.vscroll .arrow { margin: 0; }
.vthumb { flex: 528; display: flex; align-items: center; justify-content: center; border: 1px solid #60709c; border-radius: 2px; background: linear-gradient(90deg, #eef1f8, #c9cfdf 50%, #a9b0c9 51%, #c7cde4); }
.vthumb i { width: 8px; height: 8px; background: repeating-linear-gradient(#5f6980 0 1px, transparent 1px 2px); }
.vtrack { flex: 95; }
.note { position: absolute; left: 820px; top: 325px; width: 140px; height: 24px; padding-left: 4px; font: bold 16px/24px "Liberation Serif", serif; color: #cf1717; background: #f4f4f1; }
.ink { position: absolute; left: 0; top: 2px; overflow: visible; fill: none; stroke: #e00b09; stroke-width: 5; stroke-linecap: round; stroke-linejoin: round; pointer-events: none; }

/* sheet tabs */
.sheetbar { height: 17px; display: flex; background: linear-gradient(#7e92bf, #93a7d1); border-top: 1px solid #7689b1; border-bottom: 1px solid #52658f; overflow: hidden; }
.sheetnav { width: 63px; position: relative; z-index: 2; display: flex; justify-content: space-around; background: #c5d3ee; border-right: 1px solid #7589b5; }
.stab { position: relative; z-index: 1; width: 60px; font-size: 12px; }
.stab::before { content: ""; position: absolute; z-index: -1; inset: 0 1px; transform: skewX(-40deg); background: linear-gradient(#dce5f6, #b5c6e7); border: solid #6178a8; border-width: 0 1px; }
.stab.current { font-weight: 700; }
.stab.current::before { left: -6px; background: #f5f7fb; border-left: 0; }
.stab.add { width: 40px; }
.hscroll { margin-left: auto; width: 39.5%; display: flex; align-items: stretch; margin-right: 16px; }
.hsplit { width: 4px; margin: 1px 0; background: #e9f6fb; border: 1px solid #5b79a0; }
.hscroll button { width: 18px; }
.tri { border: 4px solid transparent; }
.tri.left { border-right-color: #2d3b61; border-left: 0; }
.tri.right { border-left-color: #2d3b61; border-right: 0; }
.hthumb { flex: 427; display: flex; align-items: center; justify-content: center; border: 1px solid #626b82; border-radius: 2px; background: linear-gradient(#e8eaf0, #c8cbd4 50%, #adb1be 51%, #c4c8d2); }
.hthumb i { width: 8px; height: 7px; background: repeating-linear-gradient(90deg, #5f6573 0 1px, transparent 1px 2px); }
.htrack { flex: 98; }

/* status bar */
.status { height: 21px; display: flex; align-items: center; padding-right: 5px; background: linear-gradient(#dce5fa, #c6d3f4 25%, #acbfe8 35%, #bfcff1 80%, #d5dff5); }
.ready { width: 47px; padding-left: 7px; line-height: 21px; border-right: 1px solid #91a5ce; }
.views { margin-left: auto; display: flex; border: 1px solid #7f8fae; border-radius: 2px; background: #c9cfdc; }
.views button { width: 18px; height: 16px; }
.percent { width: 45px; }
.round { width: 17px; }
.zoom { appearance: none; width: 101px; height: 16px; background: linear-gradient(#6e7fa9, #6e7fa9) center / 100% 1px no-repeat; }
.zoom::-webkit-slider-thumb { appearance: none; width: 9px; height: 12px; background: #e7ecf7; border: 1px solid #55617e; border-radius: 1px 1px 5px 5px; }

/* taskbar */
.taskbar { height: 30px; display: flex; align-items: stretch; color: #fff; font: 11px/14px "DejaVu Sans Condensed", "Open Sans", sans-serif; background: linear-gradient(#3567d0, #4a90f4 8%, #2a63e0 16%, #2358db 80%, #1a41aa); }
.start { width: 97px; gap: 4px; padding-right: 14px; font: italic bold 18px/24px "Liberation Sans", sans-serif; text-shadow: 1px 1px 1px #1d4c16; border-radius: 0 9px 9px 0; background: linear-gradient(#69b360, #3e9838 18%, #389133 75%, #28721f); box-shadow: 1px 0 3px #173e8f; }
.launchers { width: 98px; display: flex; align-items: center; padding-left: 10px; gap: 7px; }
.chev { font-size: 16px; padding: 0 0 10px 4px; }
.tasks { flex: 1; min-width: 0; display: flex; gap: 2px; padding: 3px 0; }
.task { flex: 0 1 158px; min-width: 0; justify-content: flex-start; gap: 3px; padding: 0 9px; border-radius: 2px; background: linear-gradient(#5c97fb, #3b7cf3 15%, #346de8 85%, #2b5bc6); }
.task span { overflow: hidden; text-overflow: ellipsis; }
.pressed { background: linear-gradient(#17378f, #1f4bb4 20%, #2150bb); }
.lang { width: 40px; }
.tray { width: 218px; display: flex; align-items: center; padding: 0 0 0 9px; gap: 2px; border-left: 1px solid #0d3a92; background: linear-gradient(#1e86df, #19b0f5 8%, #1390e8 20%, #128ce4 80%, #0f6fc0); }
.tray time { margin-left: 8px; }
```
